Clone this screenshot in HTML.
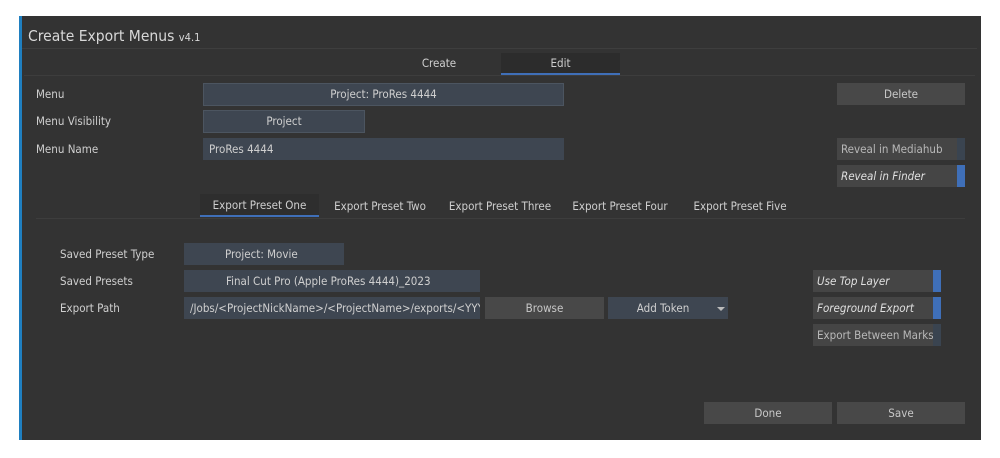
<!DOCTYPE html>
<html><head><style>
body{margin:0;width:1000px;height:458px;background:#fff;position:relative;overflow:hidden;font-family:"DejaVu Sans Condensed","Liberation Sans",sans-serif;font-size:11.5px;color:#cfcfcf}
.win{position:absolute;left:19px;top:16px;width:962px;height:424px;background:#333333;border-left:3px solid #1f7fc0;box-sizing:border-box}
.a{position:absolute;box-sizing:border-box;line-height:22px;white-space:nowrap}
.f{background:#3e4651;border:1px solid #4c5560;text-align:center;line-height:20px}
.b{background:#484848;text-align:center;color:#c8c8c8}
.t{background:#454545;padding-left:4px;font-style:italic;color:#e0e0e0}
.t i{position:absolute;right:0;top:0;width:8px;height:22px;background:#3f6fb8}
.t i.d{background:#3a4450}
.line{position:absolute;height:1px;background:#3d3d3d}
</style></head><body>
<div class="win"></div>
<div class="a" style="left:28px;top:25px;font-size:15.5px;color:#d8d8d8">Create Export Menus <span style="font-size:11px">v4.1</span></div>
<div class="line" style="left:22px;top:48px;width:955px;background:#3e3e3e"></div>
<div class="a" style="left:400px;top:52px;width:78px;text-align:center">Create</div>
<div class="a" style="left:501px;top:53px;width:119px;height:22px;background:#2c2c2c;text-align:center;border-bottom:2px solid #3f6fb8;line-height:21px">Edit</div>
<div class="line" style="left:24px;top:75px;width:951px"></div>

<div class="a" style="left:36px;top:83px">Menu</div>
<div class="a f" style="left:203px;top:83px;width:361px;height:23px">Project: ProRes 4444</div>
<div class="a b" style="left:837px;top:83px;width:128px;height:22px">Delete</div>
<div class="a" style="left:36px;top:110px">Menu Visibility</div>
<div class="a f" style="left:203px;top:110px;width:162px;height:23px">Project</div>
<div class="a" style="left:36px;top:138px">Menu Name</div>
<div class="a f" style="left:203px;top:138px;width:361px;height:22px;text-align:left;padding-left:6px;border:none;line-height:22px">ProRes 4444</div>
<div class="a t" style="left:837px;top:138px;width:128px;height:22px;font-style:normal;color:#b8b8b8">Reveal in Mediahub<i class="d"></i></div>
<div class="a t" style="left:837px;top:165px;width:128px;height:22px">Reveal in Finder<i></i></div>

<div class="a" style="left:200px;top:194px;width:119px;height:23px;background:#2e2e2e;text-align:center;border-bottom:2px solid #3f6fb8;line-height:23px">Export Preset One</div>
<div class="a" style="left:320px;top:195px;width:120px;text-align:center">Export Preset Two</div>
<div class="a" style="left:440px;top:195px;width:120px;text-align:center">Export Preset Three</div>
<div class="a" style="left:560px;top:195px;width:120px;text-align:center">Export Preset Four</div>
<div class="a" style="left:680px;top:195px;width:120px;text-align:center">Export Preset Five</div>
<div class="line" style="left:36px;top:218px;width:929px"></div>

<div class="a" style="left:60px;top:243px">Saved Preset Type</div>
<div class="a f" style="left:184px;top:243px;width:160px;height:22px;border:none;line-height:22px;text-align:left;padding-left:41px">Project: Movie</div>
<div class="a" style="left:60px;top:270px">Saved Presets</div>
<div class="a f" style="left:184px;top:270px;width:296px;height:22px;border:none;line-height:22px;text-align:left;padding-left:42px">Final Cut Pro (Apple ProRes 4444)_2023</div>
<div class="a" style="left:60px;top:297px">Export Path</div>
<div class="a f" style="left:184px;top:297px;width:296px;height:22px;border:none;line-height:22px;text-align:left;padding-left:6px;overflow:hidden">/Jobs/&lt;ProjectNickName&gt;/&lt;ProjectName&gt;/exports/&lt;YYYY</div>
<div class="a b" style="left:485px;top:297px;width:119px;height:22px">Browse</div>
<div class="a f" style="left:608px;top:297px;width:120px;height:22px;border:none;line-height:22px;padding-right:10px">Add Token<span style="position:absolute;right:3px;top:10px;width:0;height:0;border-left:4px solid transparent;border-right:4px solid transparent;border-top:4px solid #bbb"></span></div>

<div class="a t" style="left:813px;top:270px;width:128px;height:22px">Use Top Layer<i></i></div>
<div class="a t" style="left:813px;top:297px;width:128px;height:22px">Foreground Export<i></i></div>
<div class="a t" style="left:813px;top:324px;width:128px;height:22px;font-style:normal;color:#b8b8b8">Export Between Marks<i class="d"></i></div>

<div class="a b" style="left:704px;top:402px;width:128px;height:22px">Done</div>
<div class="a b" style="left:837px;top:402px;width:128px;height:22px">Save</div>
</body></html>
